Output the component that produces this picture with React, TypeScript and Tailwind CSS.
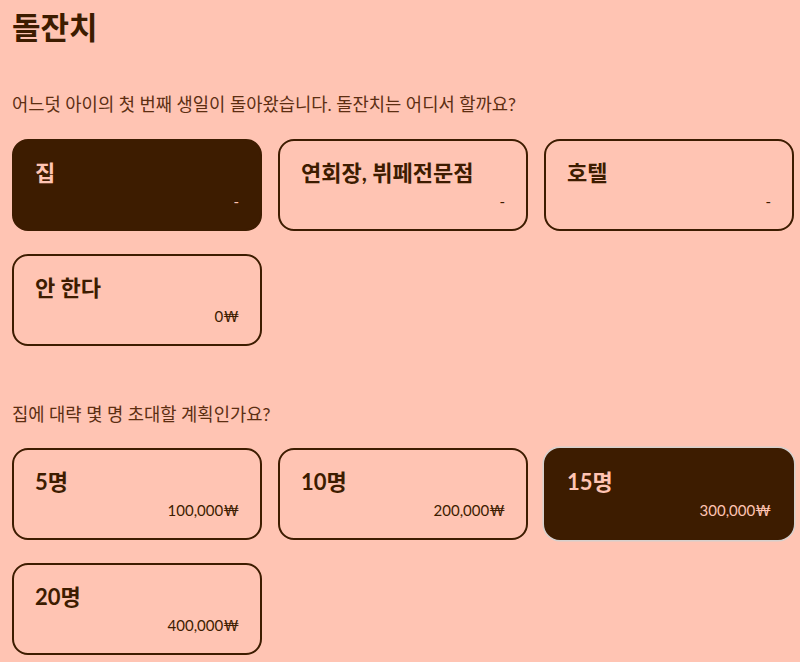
import { useState } from 'react';

type Option = {
  label: string;
  price: string;
};

const PLACES: Option[] = [
  { label: '집', price: '-' },
  { label: '연회장, 뷔페전문점', price: '-' },
  { label: '호텔', price: '-' },
  { label: '안 한다', price: '0₩' },
];

const GUESTS: Option[] = [
  { label: '5명', price: '100,000₩' },
  { label: '10명', price: '200,000₩' },
  { label: '15명', price: '300,000₩' },
  { label: '20명', price: '400,000₩' },
];

function OptionCard({
  option,
  selected,
  focused,
  onClick,
}: {
  option: Option;
  selected: boolean;
  focused?: boolean;
  onClick: () => void;
}) {
  return (
    <button
      onClick={onClick}
      className={`h-[92px] rounded-2xl border-2 border-[#3d1c00] px-[21px] pt-[18px] pb-[18px] flex flex-col justify-between text-left ${
        selected ? 'bg-[#3d1c00] text-[#ffc4b3]' : 'bg-transparent text-[#3d1c00]'
      } ${focused ? 'ring-[1.5px] ring-[#d6d0cd]' : ''}`}
    >
      <span className="text-[22px] font-bold leading-[28px]">{option.label}</span>
      <span className="self-end text-[15px] leading-5">{option.price}</span>
    </button>
  );
}

export default function App() {
  const [place, setPlace] = useState(0);
  const [guests, setGuests] = useState(2);

  return (
    <div
      className="h-screen overflow-hidden bg-[#ffc4b3] px-3 pt-[7px] text-[#3d1c00]"
      style={{ fontFamily: 'Lato, "Noto Sans CJK KR", sans-serif' }}
    >
      <h1 className="text-[31px] font-bold leading-10">돌잔치</h1>

      <p className="mt-[46px] text-[17.7px] leading-6 text-[#5c2e12]">
        어느덧 아이의 첫 번째 생일이 돌아왔습니다. 돌잔치는 어디서 할까요?
      </p>
      <div className="mt-[22px] grid grid-cols-[repeat(3,250px)] gap-x-4 gap-y-[23px]">
        {PLACES.map((o, i) => (
          <OptionCard key={o.label} option={o} selected={place === i} onClick={() => setPlace(i)} />
        ))}
      </div>

      <p className="mt-[57px] text-[17.7px] leading-6 text-[#5c2e12]">집에 대략 몇 명 초대할 계획인가요?</p>
      <div className="mt-[21px] grid grid-cols-[repeat(3,250px)] gap-x-4 gap-y-[23px]">
        {GUESTS.map((o, i) => (
          <OptionCard
            key={o.label}
            option={o}
            selected={guests === i}
            focused={guests === i}
            onClick={() => setGuests(i)}
          />
        ))}
      </div>
    </div>
  );
}
